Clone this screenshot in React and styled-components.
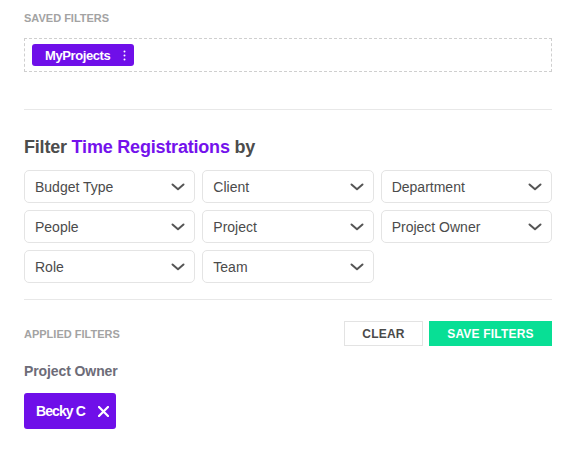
import React from 'react'
import styled, { createGlobalStyle } from 'styled-components'

const GlobalStyle = createGlobalStyle`
  body {
    margin: 0;
    background: #fff;
    font-family: "Liberation Sans", Arial, sans-serif;
  }
`

const Page = styled.div`
  padding: 12px 28px 0 24px;
  width: 528px;
`

const SectionLabel = styled.div`
  font-size: 11px;
  line-height: 12px;
  font-weight: 700;
  color: #a3a3a3;
  letter-spacing: 0;
`

const SavedBox = styled.div`
  margin-top: 14px;
  height: 34px;
  box-sizing: border-box;
  border: 1px dashed #cfcfcf;
  padding: 5px 7px;
  display: flex;
  align-items: flex-start;
`

const SavedChip = styled.div`
  height: 22px;
  display: flex;
  align-items: center;
  gap: 13px;
  padding: 0 8px 0 13px;
  background: #6f0fe9;
  border-radius: 3px;
  color: #fff;
  font-size: 13px;
  font-weight: 700;
  letter-spacing: -0.4px;
`

const Divider = styled.hr`
  border: 0;
  height: 1px;
  background: #e8e8e8;
  margin: ${p => p.$top}px 0 0;
`

const Heading = styled.h2`
  margin: 26px 0 0;
  font-size: 18px;
  line-height: 22px;
  font-weight: 700;
  color: #4c4c4c;
  letter-spacing: -0.2px;
`

const Accent = styled.span`
  color: #7412ec;
`

const Grid = styled.div`
  margin-top: 12px;
  display: grid;
  grid-template-columns: repeat(3, 1fr);
  gap: 7px;
`

const Select = styled.div`
  height: 33px;
  box-sizing: border-box;
  border: 1px solid #e4e4e4;
  border-radius: 5px;
  display: flex;
  align-items: center;
  justify-content: space-between;
  padding: 0 9px 0 10px;
  font-size: 14px;
  color: #4b4b4b;
`

const ActionRow = styled.div`
  margin-top: 21px;
  display: flex;
  align-items: center;
  justify-content: space-between;
`

const Buttons = styled.div`
  display: flex;
  gap: 6px;
`

const Button = styled.button`
  height: 25px;
  width: ${p => p.$w}px;
  box-sizing: border-box;
  border: 1px solid ${p => (p.$primary ? '#08df95' : '#e3e3e3')};
  background: ${p => (p.$primary ? '#08df95' : '#fff')};
  color: ${p => (p.$primary ? '#fff' : '#4a4a4a')};
  font-family: "Liberation Sans", Arial, sans-serif;
  font-size: 12px;
  font-weight: 700;
  padding: 0;
  letter-spacing: 0.2px;
`

const GroupTitle = styled.div`
  margin-top: 17px;
  font-size: 14px;
  line-height: 17px;
  font-weight: 700;
  color: #6d6c78;
  letter-spacing: -0.1px;
`

const ValueChip = styled.div`
  margin-top: 13px;
  width: 92px;
  height: 36px;
  box-sizing: border-box;
  display: flex;
  align-items: center;
  gap: 13px;
  padding-left: 12px;
  background: #6f0fe9;
  border-radius: 3px;
  color: #fff;
  font-size: 14px;
  font-weight: 700;
  letter-spacing: -0.9px;
`

const Chevron = () => (
  <svg width="14" height="8" viewBox="0 0 14 8">
    <polyline points="1.5,1.5 7,6.2 12.5,1.5" fill="none" stroke="#555" strokeWidth="2" strokeLinecap="round" strokeLinejoin="round" />
  </svg>
)

const Dots = () => (
  <svg width="3" height="11" viewBox="0 0 3 11">
    <circle cx="1.5" cy="1.5" r="1" fill="#fff" />
    <circle cx="1.5" cy="5.5" r="1" fill="#fff" />
    <circle cx="1.5" cy="9.5" r="1" fill="#fff" />
  </svg>
)

const Cross = () => (
  <svg width="11" height="11" viewBox="0 0 11 11">
    <path d="M1 1L10 10M10 1L1 10" stroke="#fff" strokeWidth="2.2" strokeLinecap="square" />
  </svg>
)

const filters = ['Budget Type', 'Client', 'Department', 'People', 'Project', 'Project Owner', 'Role', 'Team']

export default function App () {
  return (
    <Page>
      <GlobalStyle />
      <SectionLabel>SAVED FILTERS</SectionLabel>
      <SavedBox>
        <SavedChip>
          MyProjects
          <Dots />
        </SavedChip>
      </SavedBox>
      <Divider $top={37} />
      <Heading>
        Filter <Accent>Time Registrations</Accent> by
      </Heading>
      <Grid>
        {filters.map(f => (
          <Select key={f}>
            {f}
            <Chevron />
          </Select>
        ))}
      </Grid>
      <Divider $top={16} />
      <ActionRow>
        <SectionLabel>APPLIED FILTERS</SectionLabel>
        <Buttons>
          <Button $w={79}>CLEAR</Button>
          <Button $w={123} $primary>SAVE FILTERS</Button>
        </Buttons>
      </ActionRow>
      <GroupTitle>Project Owner</GroupTitle>
      <ValueChip>
        Becky C
        <Cross />
      </ValueChip>
    </Page>
  )
}
